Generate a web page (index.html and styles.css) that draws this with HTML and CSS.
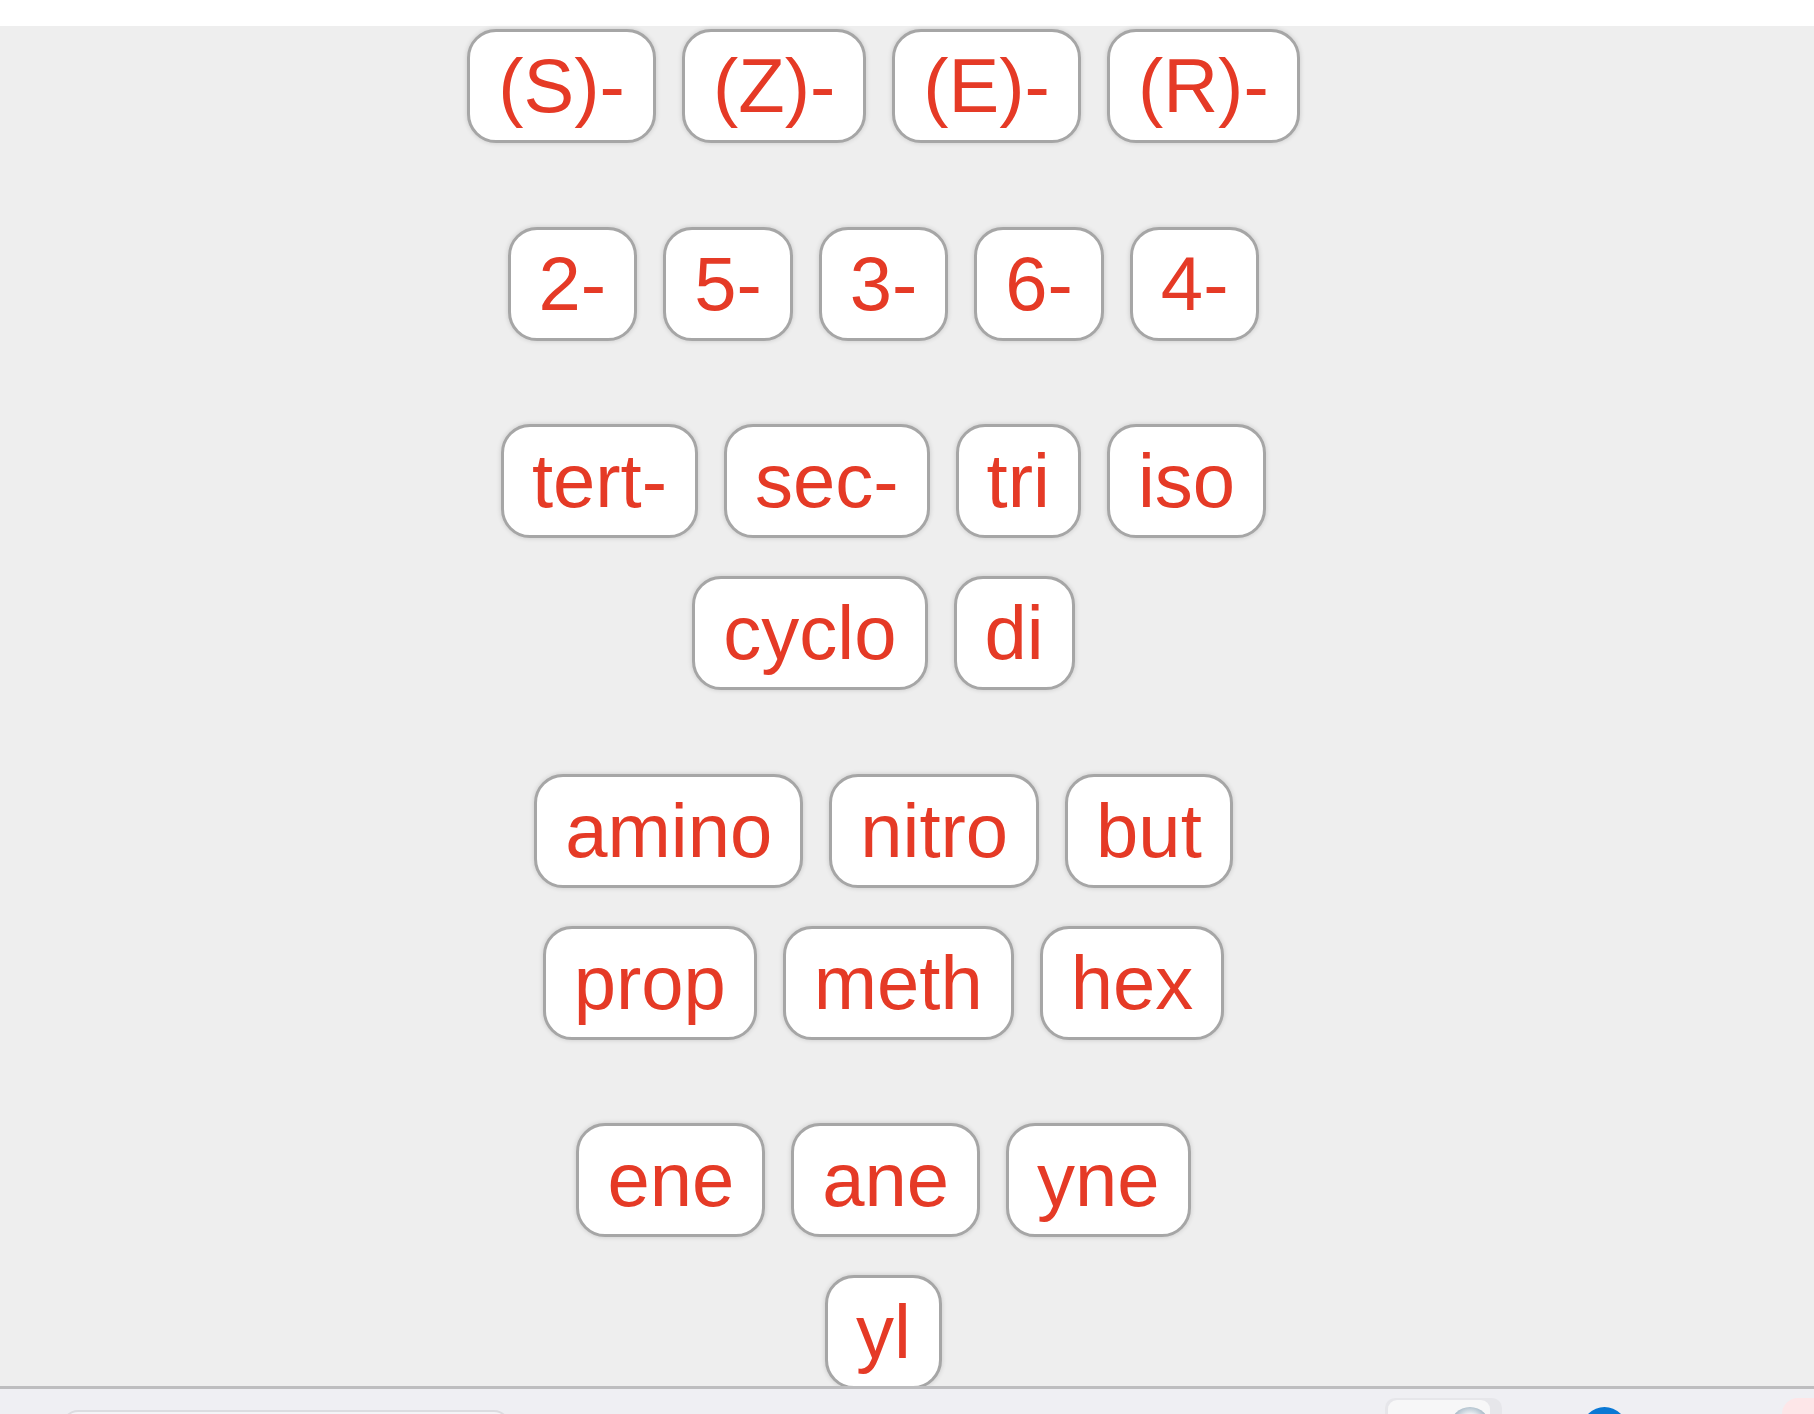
FILE: index.html
```html
<!DOCTYPE html>
<html lang="en">
<head>
<meta charset="utf-8">
<title>Name parts</title>
<link rel="stylesheet" href="styles.css">
</head>
<body>
<div class="topband"></div>
<main class="board">
  <section class="group">
    <div class="row">
      <button class="chip">(S)-</button>
      <button class="chip">(Z)-</button>
      <button class="chip">(E)-</button>
      <button class="chip">(R)-</button>
    </div>
  </section>
  <section class="group">
    <div class="row">
      <button class="chip">2-</button>
      <button class="chip">5-</button>
      <button class="chip">3-</button>
      <button class="chip">6-</button>
      <button class="chip">4-</button>
    </div>
  </section>
  <section class="group">
    <div class="row">
      <button class="chip">tert-</button>
      <button class="chip">sec-</button>
      <button class="chip">tri</button>
      <button class="chip">iso</button>
    </div>
    <div class="row">
      <button class="chip">cyclo</button>
      <button class="chip">di</button>
    </div>
  </section>
  <section class="group">
    <div class="row">
      <button class="chip">amino</button>
      <button class="chip">nitro</button>
      <button class="chip">but</button>
    </div>
    <div class="row">
      <button class="chip">prop</button>
      <button class="chip">meth</button>
      <button class="chip">hex</button>
    </div>
  </section>
  <section class="group">
    <div class="row">
      <button class="chip">ene</button>
      <button class="chip">ane</button>
      <button class="chip">yne</button>
    </div>
    <div class="row">
      <button class="chip">yl</button>
    </div>
  </section>
</main>
<footer class="taskbar">
  <div class="search"></div>
  <div class="tray">
    <div class="tray-inner"></div>
    <div class="tray-icon"></div>
  </div>
  <div class="blue-dot"></div>
  <div class="pink-pill"></div>
</footer>
</body>
</html>
```

FILE: styles.css
```css
html, body {
  margin: 0;
  padding: 0;
}

body {
  background: #eeeeee;
  font-family: "Liberation Sans", Arial, sans-serif;
  overflow: hidden;
}

.topband {
  height: 26px;
  background: #ffffff;
}

.board {
  width: 1767px;
  padding-top: 3px;
  display: flex;
  flex-direction: column;
  gap: 83.5px;
}

.group {
  display: flex;
  flex-direction: column;
  gap: 38px;
}

.row {
  display: flex;
  justify-content: center;
  gap: 26px;
}

.chip {
  margin: 0;
  padding: 10px 28px;
  font-family: "Liberation Sans", Arial, sans-serif;
  font-size: 76px;
  line-height: 88px;
  color: #e53a26;
  background: #ffffff;
  border: 3px solid #a6a6a6;
  border-radius: 29px;
  box-shadow: 0 0 5px rgba(0, 0, 0, 0.16);
  white-space: nowrap;
  cursor: pointer;
}

.taskbar {
  position: fixed;
  left: 0;
  right: 0;
  top: 1386px;
  height: 28px;
  border-top: 3px solid #bdbdbf;
  background: #efeff3;
  display: flex;
  align-items: flex-start;
  overflow: hidden;
}

.search {
  margin-left: 62px;
  margin-top: 21px;
  width: 444px;
  height: 30px;
  border: 2px solid #dcdce0;
  border-radius: 16px;
  background: #f4f4f7;
  flex: none;
}

.tray {
  margin-left: 875px;
  margin-top: 9px;
  width: 117px;
  height: 40px;
  border-radius: 10px;
  background: #e6e6ea;
  flex: none;
  display: flex;
  align-items: flex-start;
  padding-left: 3px;
  box-sizing: border-box;
}

.tray-inner {
  margin-top: 2px;
  width: 102px;
  height: 36px;
  border-radius: 9px;
  background: #f7f7f8;
  display: flex;
}

.tray-icon {
  margin-left: -40px;
  margin-top: 9px;
  width: 40px;
  height: 40px;
  border-radius: 50%;
  background: radial-gradient(circle at 50% 40%, #e9eef2 0 30%, #9fb3c2 60%, #c7d3dc 100%);
}

.blue-dot {
  margin-left: 80px;
  margin-top: 18px;
  width: 45px;
  height: 45px;
  border-radius: 50%;
  background: #0a78d4;
  flex: none;
}

.pink-pill {
  margin-left: 155px;
  margin-top: 9px;
  width: 70px;
  height: 40px;
  border-radius: 16px;
  background: #fde6e8;
  flex: none;
}
```
